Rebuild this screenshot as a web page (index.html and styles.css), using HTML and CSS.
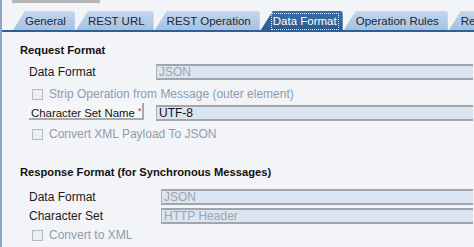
FILE: index.html
```html
<!DOCTYPE html>
<html>
<head>
<meta charset="utf-8">
<link rel="stylesheet" href="styles.css">
</head>
<body>
<div class="top"><div class="topbar"></div></div>
<div class="tabs">
  <div class="tab first">General</div>
  <div class="tab">REST URL</div>
  <div class="tab">REST Operation</div>
  <div class="tab sel"><span class="focus">Data Format</span></div>
  <div class="tab">Operation Rules</div>
  <div class="tab last">Re</div>
</div>
<div class="panel">
  <div class="title t1">Request Format</div>
  <div class="row r1">
    <div class="label req">Data Format</div>
    <div class="input dis">JSON</div>
  </div>
  <div class="check c1"><span class="box"></span><span class="ctext">Strip Operation from Message (outer element)</span></div>
  <div class="row r2">
    <div class="label req"><span class="btn">Character Set Name <span class="star">*</span></span></div>
    <div class="input">UTF-8</div>
  </div>
  <div class="check c2"><span class="box"></span><span class="ctext">Convert XML Payload To JSON</span></div>
  <div class="title t2">Response Format (for Synchronous Messages)</div>
  <div class="row r3">
    <div class="label resp">Data Format</div>
    <div class="input dis">JSON</div>
  </div>
  <div class="row r4">
    <div class="label resp">Character Set</div>
    <div class="input dis">HTTP Header</div>
  </div>
  <div class="check c3"><span class="box"></span><span class="ctext">Convert to XML</span></div>
</div>
</body>
</html>
```
FILE: styles.css
```css
html, body {
  margin: 0;
  padding: 0;
  background: #f3f4f7;
  font-family: "Liberation Sans", Arial, sans-serif;
  overflow: hidden;
}
body {
  width: 474px;
  height: 247px;
  border-left: 2px solid #8ea6c4;
  box-sizing: border-box;
}
.top {
  height: 11px;
  padding-left: 10px;
}
.topbar {
  width: 88px;
  height: 3px;
  background: #b3b5b8;
}
.tabs {
  display: flex;
  height: 19px;
  padding-left: 11px;
  border-bottom: 2px solid #2f5f97;
  white-space: nowrap;
  overflow: hidden;
}
.tab {
  flex: none;
  height: 19px;
  line-height: 20px;
  font-size: 11.5px;
  color: #1b2638;
  padding: 0 9px 0 12px;
  margin-right: 1px;
  background: linear-gradient(#c3d7ec, #a4c1e1);
  clip-path: polygon(12px 0, 100% 0, 100% 100%, 0 100%);
  border-top-right-radius: 3px;
}
.tab.last {
  flex: 1;
  padding-right: 0;
}
.tab.sel {
  background: linear-gradient(#3a6ba3, #2c5c93);
  color: #fff;
  padding: 0 4px 0 10px;
}
.focus {
  display: inline-block;
  line-height: 15px;
  padding: 0 1px;
  border: 1px dotted #e8eef6;
}
.panel {
  padding-top: 11px;
}
.title {
  font-size: 11.2px;
  font-weight: bold;
  line-height: 14px;
  padding-left: 18px;
  color: #111;
}
.t2 { margin-top: 23px; }
.row {
  display: flex;
  align-items: center;
  height: 16px;
}
.r1 { margin-top: 7px; }
.r2 { margin-top: 2px; height: 17px; }
.r3 { margin-top: 10px; }
.r4 { margin-top: 3px; }
.label {
  flex: none;
  font-size: 12px;
  color: #1a1a1a;
  padding-left: 27px;
  box-sizing: border-box;
  white-space: nowrap;
}
.label.req { width: 154px; }
.label.resp { width: 159px; }
.btn {
  display: inline-block;
  width: 115px;
  height: 17px;
  line-height: 16px;
  box-sizing: border-box;
  padding-left: 2px;
  background: #f6f6f6;
  border-right: 2px solid #a9abae;
  border-bottom: 2px solid #a9abae;
  color: #111;
  font-size: 11.4px;
  white-space: nowrap;
  overflow: hidden;
}
.star {
  color: #d42020;
  font-size: 9px;
  vertical-align: 3px;
}
.input {
  flex: 1;
  height: 16px;
  box-sizing: border-box;
  margin-right: 1px;
  background: #dbe5f1;
  border-top: 2px solid #a2a6ab;
  border-bottom: 2px solid #a2a6ab;
  border-left: 1px solid #aeb2b7;
  font-size: 12px;
  line-height: 12px;
  padding-left: 2px;
  color: #111;
}
.input.dis { color: #9ba5b1; }
.check {
  display: flex;
  align-items: center;
  height: 16px;
  padding-left: 30px;
  font-size: 12px;
  color: #8d9bb0;
}
.c1 { margin-top: 6px; }
.c2 { margin-top: 5px; }
.c3 { margin-top: 3px; }
.box {
  width: 11px;
  height: 11px;
  box-sizing: border-box;
  border: 1px solid #b4bac3;
  background: #eceef1;
  margin-right: 6px;
}
```
